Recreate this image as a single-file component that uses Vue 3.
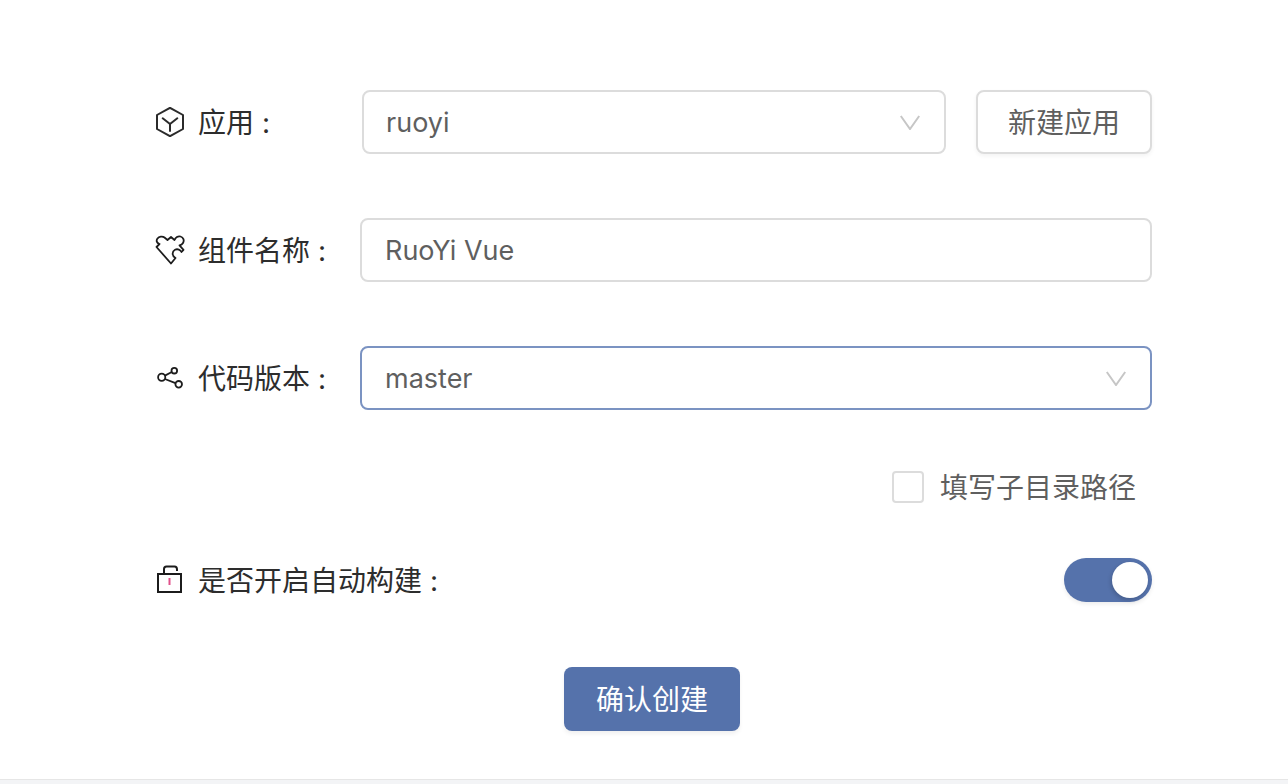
<template>
  <div class="page">
    <div class="form">
      <div class="row">
        <div class="label label-app">
          <svg class="icon" viewBox="0 0 30 30" fill="none" stroke="#2b2b2b" stroke-width="2">
            <path d="M15 .8 28 8V22L15 29.200 2 22V8Z" stroke-linejoin="round" />
            <path d="M7.700 11.300 15 17 22.300 11.300M15 17V24" stroke-linecap="round" />
          </svg>
          <span>应用 :</span>
        </div>
        <div class="select select-app">
          <span>{{ app }}</span>
          <svg class="arrow" viewBox="0 0 20 15" fill="none" stroke="#c6c6c6" stroke-width="2">
            <path d="M.8 1 10 14 19.200 1" />
          </svg>
        </div>
        <button class="new-btn">新建应用</button>
      </div>

      <div class="row">
        <div class="label">
          <svg class="icon" viewBox="0 0 30 30" fill="none" stroke="#1c1c1c" stroke-width="1.800" stroke-linejoin="round">
            <path d="M1.500 12 4.500 9C1.500 8 1 5.500 2.500 3.500 4 1.500 7.500 1 9.500 2.500L12.500 5 16 2 19.500 5C20.500 2.500 23 .8 25.500 1.500 28.500 2.300 29.500 5.500 28 8 27.300 9.300 26 10 24.500 10.300L28.500 14.800 26.500 17C25.500 14.800 22.500 13.500 20 14.800 16.800 16.500 16.800 21 20.500 23L16 28.500Z" />
          </svg>
          <span>组件名称 :</span>
        </div>
        <div class="input">{{ name }}</div>
      </div>

      <div class="row">
        <div class="label">
          <svg class="icon" viewBox="0 0 30 30" fill="none" stroke="#1c1c1c" stroke-width="1.800">
            <circle cx="6.700" cy="14.300" r="3.600" />
            <circle cx="19.300" cy="7.700" r="2.800" />
            <circle cx="23.700" cy="21.300" r="3.300" />
            <path d="M9.900 12.600 16.800 9M9.900 16 20.500 20.200" />
          </svg>
          <span>代码版本 :</span>
        </div>
        <div class="select focused">
          <span>{{ branch }}</span>
          <svg class="arrow" viewBox="0 0 20 15" fill="none" stroke="#c6c6c6" stroke-width="2">
            <path d="M.8 1 10 14 19.200 1" />
          </svg>
        </div>
      </div>

      <div class="check-row">
        <span class="checkbox"></span>
        <span class="check-text">填写子目录路径</span>
      </div>

      <div class="row switch-row">
        <div class="label">
          <svg class="icon" viewBox="0 0 30 30" fill="none" stroke="#1c1c1c" stroke-width="2">
            <rect x="3" y="9" width="23" height="18" />
            <path d="M9 9V4C9 2 10 1.500 11.500 1.500H19.500C21 1.500 22 2.500 22 4.500V6" />
            <path d="M14.500 13V20" stroke="#e0508a" />
          </svg>
          <span>是否开启自动构建 :</span>
        </div>
        <div class="switch"><span class="knob"></span></div>
      </div>

      <div class="actions">
        <button class="submit">确认创建</button>
      </div>
    </div>
    <div class="bottom-line"></div>
  </div>
</template>

<script setup>
import { ref } from 'vue'

const app = ref('ruoyi')
const name = ref('RuoYi Vue')
const branch = ref('master')
</script>

<style>
html,
body {
  margin: 0;
  background: #fff;
  overflow: hidden;
}
</style>

<style scoped>
.page {
  height: 784px;
  box-sizing: border-box;
  padding: 90px 136px 0 155px;
  font-family: Inter, "Noto Sans CJK SC", sans-serif;
  font-size: 28px;
  color: #5f5f5f;
  position: relative;
}

.row {
  display: flex;
  align-items: center;
  height: 64px;
  margin-bottom: 64px;
}

.label {
  display: flex;
  align-items: center;
  width: 205px;
  flex: none;
  color: #2d2d2d;
  white-space: nowrap;
}

.label-app {
  width: 207px;
}

.label span {
  margin-top: -3px;
}

.icon {
  width: 30px;
  height: 30px;
  margin-right: 13px;
  flex: none;
}

.select,
.input {
  flex: 1;
  height: 64px;
  box-sizing: border-box;
  border: 2px solid #dcdcdc;
  border-radius: 8px;
  padding: 0 23px;
  display: flex;
  align-items: center;
  justify-content: space-between;
  background: #fff;
  font-size: 27px;
}

.select-app {
  padding-left: 22px;
}

.select.focused {
  border-color: #7b93c2;
}

.arrow {
  width: 20px;
  height: 15px;
  margin-right: 1px;
}

.new-btn {
  width: 176px;
  height: 64px;
  margin-left: 30px;
  flex: none;
  border: 2px solid #dcdcdc;
  border-radius: 8px;
  background: #fff;
  color: #5f5f5f;
  font: inherit;
  padding: 0 0 3px;
  box-shadow: 0 2px 4px rgba(0, 0, 0, 0.05);
}

.check-row {
  display: flex;
  align-items: center;
  justify-content: flex-end;
  height: 32px;
  margin-top: -3px;
  padding-right: 16px;
}

.checkbox {
  width: 32px;
  height: 32px;
  box-sizing: border-box;
  border: 2px solid #dcdcdc;
  border-radius: 4px;
  margin-right: 16px;
}

.check-text {
  margin-top: -3px;
}

.switch-row {
  justify-content: space-between;
  height: 44px;
  margin-top: 55px;
  margin-bottom: 65px;
}

.switch {
  width: 88px;
  height: 44px;
  border-radius: 22px;
  background: #5572ab;
  position: relative;
  box-shadow: 0 2px 4px rgba(0, 0, 0, 0.08);
}

.knob {
  position: absolute;
  right: 4px;
  top: 4px;
  width: 36px;
  height: 36px;
  border-radius: 50%;
  background: #fff;
  box-shadow: -1px 2px 4px rgba(0, 0, 0, 0.18);
}

.actions {
  display: flex;
  justify-content: center;
  padding-right: 3px;
}

.submit {
  width: 176px;
  height: 64px;
  border: none;
  border-radius: 8px;
  background: #5572ab;
  color: #fff;
  font: inherit;
  padding: 0 0 2px;
  box-shadow: 0 3px 4px rgba(0, 0, 0, 0.06);
}

.bottom-line {
  position: absolute;
  left: 0;
  right: 0;
  bottom: 0;
  height: 5px;
  box-sizing: border-box;
  border-top: 1px solid #e6e6e6;
  background: #f3f4f6;
}
</style>
